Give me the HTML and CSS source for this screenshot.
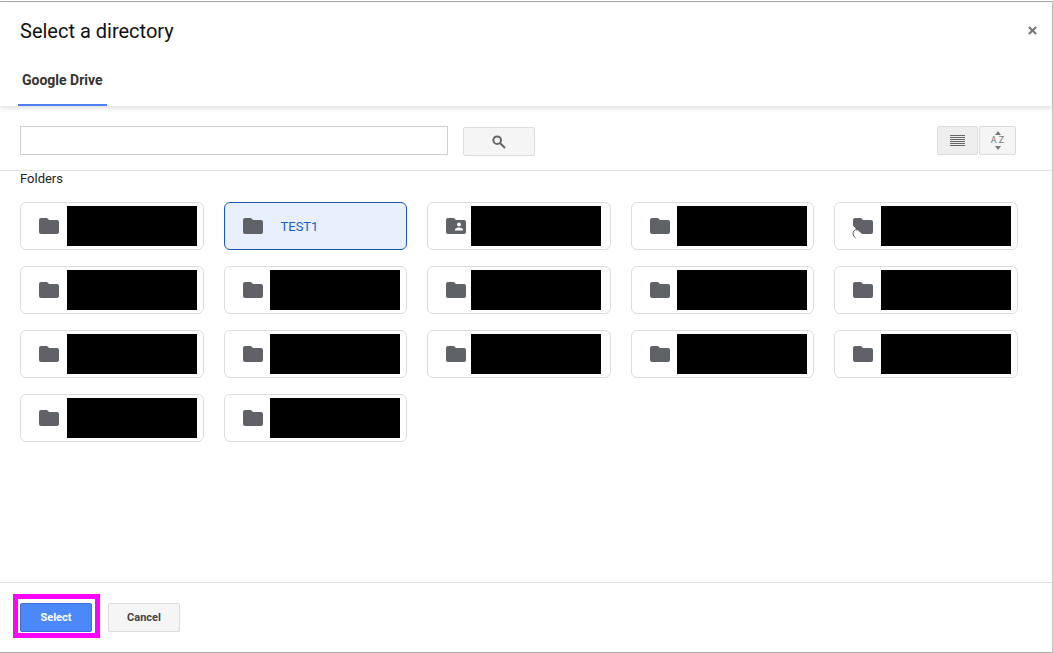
FILE: index.html
```html
<!DOCTYPE html>
<html lang="en">
<head>
<meta charset="utf-8">
<title>Select a directory</title>
<link rel="stylesheet" href="styles.css">
</head>
<body>
<svg class="defs" width="0" height="0" aria-hidden="true">
  <symbol id="folder" viewBox="0 0 20 16"><path d="M2 0h6l2 2h8a2 2 0 0 1 2 2v10a2 2 0 0 1-2 2H2a2 2 0 0 1-2-2V2a2 2 0 0 1 2-2z"/></symbol>
</svg>
<div class="dialog">
  <header class="head">
    <div class="title-row">
      <h1 class="title">Select a directory</h1>
      <svg class="close" viewBox="0 0 10 10"><path d="M1 1l8 8M9 1l-8 8"/></svg>
    </div>
    <div class="tabs"><div class="tab">Google Drive</div></div>
  </header>
  <div class="toolbar">
    <input class="search" type="text" aria-label="Search">
    <button class="btn search-btn" aria-label="Search">
      <svg class="mag" viewBox="0 0 14 14"><circle cx="5.2" cy="5.2" r="3.8"/><path d="M8 8l5 5"/></svg>
    </button>
    <div class="views">
      <button class="btn view list" aria-label="List view">
        <svg viewBox="0 0 15 11" width="15" height="11"><path d="M0 .5h15M0 2.5h15M0 4.5h15M0 6.5h15M0 8.5h15M0 10.5h15"/></svg>
      </button>
      <button class="btn view sort" aria-label="Sort">
        <span class="arrow up"></span>
        <span class="az">A Z</span>
        <span class="arrow down"></span>
      </button>
    </div>
  </div>
  <main class="content">
    <div class="section-label">Folders</div>
    <div class="grid">
      <div class="card"><svg class="ficon"><use href="#folder"/></svg><span class="mask"></span></div>
      <div class="card selected"><svg class="ficon"><use href="#folder"/></svg><span class="name">TEST1</span></div>
      <div class="card shifted">
        <svg class="ficon" viewBox="0 0 20 16"><path fill-rule="evenodd" d="M2 0h6l2 2h8a2 2 0 0 1 2 2v10a2 2 0 0 1-2 2H2a2 2 0 0 1-2-2V2a2 2 0 0 1 2-2zM13 4.5a2 2 0 1 0 0 4 2 2 0 0 0 0-4zM9 12.600h8v-1c0-1.500-2.700-2.200-4-2.200s-4 .7-4 2.200z"/></svg>
        <span class="mask"></span>
      </div>
      <div class="card"><svg class="ficon"><use href="#folder"/></svg><span class="mask"></span></div>
      <div class="card">
        <span class="sync-wrap">
          <svg class="ficon"><use href="#folder"/></svg>
          <svg class="sync" viewBox="0 0 10 14"><path class="sync-cut" d="M0 0l10 9v5H0z"/><path class="sync-arc" d="M5.500 4a4.500 4.500 0 0 0-4.200 6c.4 1.200 1.200 2.200 2.400 3M3.800 2.500L5.500 4 3.800 5.500"/></svg>
        </span>
        <span class="mask"></span>
      </div>
      <div class="card"><svg class="ficon"><use href="#folder"/></svg><span class="mask"></span></div>
      <div class="card"><svg class="ficon"><use href="#folder"/></svg><span class="mask"></span></div>
      <div class="card shifted"><svg class="ficon"><use href="#folder"/></svg><span class="mask"></span></div>
      <div class="card"><svg class="ficon"><use href="#folder"/></svg><span class="mask"></span></div>
      <div class="card"><svg class="ficon"><use href="#folder"/></svg><span class="mask"></span></div>
      <div class="card"><svg class="ficon"><use href="#folder"/></svg><span class="mask"></span></div>
      <div class="card"><svg class="ficon"><use href="#folder"/></svg><span class="mask"></span></div>
      <div class="card shifted"><svg class="ficon"><use href="#folder"/></svg><span class="mask"></span></div>
      <div class="card"><svg class="ficon"><use href="#folder"/></svg><span class="mask"></span></div>
      <div class="card"><svg class="ficon"><use href="#folder"/></svg><span class="mask"></span></div>
      <div class="card"><svg class="ficon"><use href="#folder"/></svg><span class="mask"></span></div>
      <div class="card"><svg class="ficon"><use href="#folder"/></svg><span class="mask"></span></div>
    </div>
  </main>
  <footer class="foot">
    <span class="highlight"><button class="btn primary">Select</button></span>
    <button class="btn cancel">Cancel</button>
  </footer>
</div>
</body>
</html>
```
FILE: styles.css
```css
* { box-sizing: border-box; }
html, body { margin: 0; height: 100%; }
body { background: #fff; font-family: Roboto, "Liberation Sans", sans-serif; color: #000; overflow: hidden; padding-top: 1px; }
.defs { position: absolute; }
.dialog {
  width: 1053px;
  height: 652px;
  padding-top: 1px;
  border-top: 1px solid #acacac;
  border-bottom: 1px solid #acacac;
  border-right: 1px solid #c4c4c4;
  display: flex;
  flex-direction: column;
  position: relative;
  background: #fff;
}
.head {
  height: 103px;
  padding: 0 0 0 18px;
  box-shadow: 0 2px 5px rgba(0, 0, 0, .14);
  display: flex;
  flex-direction: column;
  position: relative;
  z-index: 1;
  background: #fff;
}
.title-row { display: flex; justify-content: space-between; align-items: flex-start; height: 58px; }
.title { margin: 15px 0 0 2px; font-size: 20px; line-height: 26px; font-weight: 400; color: #111; }
.close { width: 9px; height: 9px; margin: 22.500px 15.500px 0 0; fill: none; stroke: #777; stroke-width: 2.400; }
.tabs { display: flex; }
.tab {
  width: 89px;
  height: 45px;
  padding: 10px 0 0 4px;
  border-bottom: 2px solid #4d7ff0;
  font-size: 14px;
  line-height: 18px;
  font-weight: 700;
  color: #333;
}
.toolbar {
  height: 65px;
  padding: 20px 36px 0 20px;
  border-bottom: 1px solid #e2e2e2;
  display: flex;
  align-items: flex-start;
}
.search { width: 428px; height: 29px; border: 1px solid #cfcfcf; background: #fff; padding: 0; }
.btn {
  font-family: inherit;
  border: 1px solid #dcdcdc;
  border-radius: 2px;
  background: #f5f5f5;
  padding: 0;
  display: flex;
  align-items: center;
  justify-content: center;
}
.search-btn { width: 72px; height: 29px; margin: 1px 0 0 15px; }
.mag { width: 14px; height: 14px; fill: none; stroke: #666; stroke-width: 2; }
.views { margin-left: auto; display: flex; gap: 1px; }
.view { height: 29px; }
.list { width: 41px; background: #eee; }
.list path { stroke: #666; stroke-width: 1; fill: none; }
.sort { width: 37px; flex-direction: column; gap: 1px; }
.az { font-size: 9px; line-height: 9px; color: #777; white-space: pre; }
.arrow { width: 0; height: 0; border-left: 3.500px solid transparent; border-right: 3.500px solid transparent; }
.arrow.up { border-bottom: 4px solid #777; }
.arrow.down { border-top: 4px solid #777; }
.content { flex: 1; padding: 0 34px 0 20px; min-height: 0; }
.section-label { font-size: 13px; line-height: 15px; color: #222; height: 31px; }
.grid { display: grid; grid-template-columns: repeat(5, 183.500px); column-gap: 20px; row-gap: 16px; grid-auto-rows: 48px; }
.card {
  border: 1px solid #dadce0;
  border-radius: 6px;
  padding: 3px 6px 3px 18px;
  display: flex;
  align-items: center;
  background: #fff;
}
.card.shifted { padding-right: 9px; }
.card.selected { background: #e8f0fe; border-color: #1a56b8; }
.ficon { width: 20px; height: 16px; fill: #5f6368; flex: none; }
.mask { width: 130px; height: 40px; background: #000; margin-left: auto; }
.name { margin-left: 18px; font-size: 13px; color: #1a5cc8; }
.sync-wrap { position: relative; display: flex; }
.sync { position: absolute; left: -1px; top: 7px; width: 10px; height: 14px; }
.sync-cut { fill: #fff; }
.sync-arc { fill: none; stroke: #555; stroke-width: 1; }
.foot {
  height: 70px;
  border-top: 1px solid #e2e2e2;
  padding: 20px 0 0 20px;
  display: flex;
  align-items: flex-start;
  gap: 16px;
}
.highlight { position: relative; display: flex; }
.highlight::after {
  content: "";
  position: absolute;
  left: -7px;
  right: -8px;
  top: -9px;
  bottom: -6px;
  border: 5px solid #f0f;
  pointer-events: none;
}
.primary { width: 72px; height: 29px; background: #4d88fb; border-color: #3a6fd8; color: #fff; font-size: 11px; font-weight: 700; }
.cancel { width: 72px; height: 29px; color: #444; font-size: 11px; font-weight: 700; }
```
